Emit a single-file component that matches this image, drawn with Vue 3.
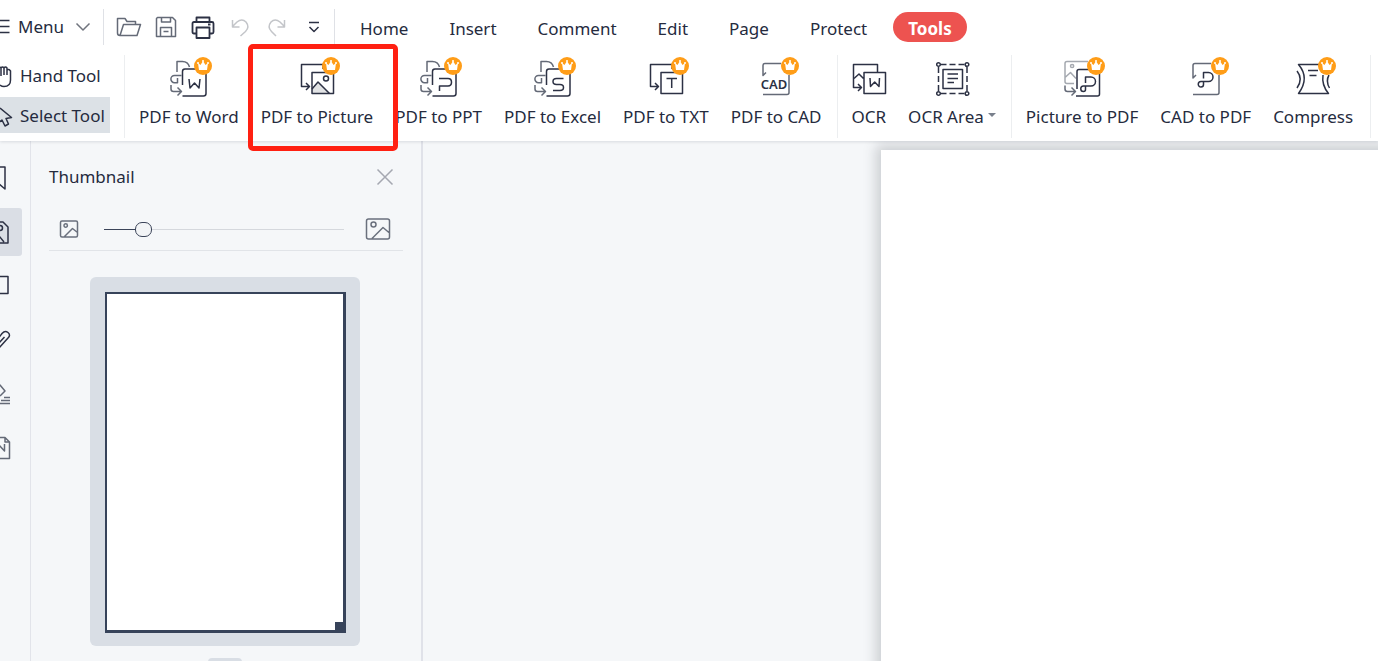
<script setup>
import { ref } from 'vue'

const zoom = ref(14)

const tabs = ['Home', 'Insert', 'Comment', 'Edit', 'Page', 'Protect', 'Tools']
const activeTab = ref('Tools')

const target = 'M17.5 29V15.5Q17.5 13 20 13H38.500Q41 13 41 15.500V37.500Q41 40 38.500 40H17.500'
const flow = [
  { d: 'M12 16V5.500H17.500Q23 5.500 24.500 11', tone: 'soft' },
  { d: 'M16.500 19.500H9.500A3.600 3.600 0 0 0 9.500 26.700H12.500V22', tone: 'soft' },
  { d: 'M6 29V33Q6 35.500 8.500 35.500H16M12.500 31.500L16.500 35.500L12.500 39.500', tone: 'soft' },
  { d: target, tone: 'ink' }
]
const frames = [
  { d: 'M30 13V8.500H8.500V30.500H16M13 27L16.500 30.500L13 34', tone: 'ink' },
  { d: 'M19 16.500H40.500V37.500H19Z', tone: 'ink' }
]

const groups = [
  [
    { label: 'PDF to Word', pro: true, shapes: [...flow, { d: 'M24 23L25 32L29.500 27L34 32L35 23', tone: 'ink' }] },
    {
      label: 'PDF to Picture', pro: true, marked: true,
      shapes: [
        { d: 'M19 33L25 26L36.500 37.500H19Z', tone: 'fill' },
        ...frames,
        { d: 'M19 33L25 26L36.500 37.500', tone: 'ink' },
        { d: 'M30.500 22.500A2.500 2.500 0 1 0 35.500 22.500A2.500 2.500 0 1 0 30.500 22.500', tone: 'ink' }
      ]
    },
    { label: 'PDF to PPT', pro: true, shapes: [...flow, { d: 'M24 22.500H33Q36.500 22.500 36.500 26.200T33 30H24.500V35', tone: 'ink' }] },
    { label: 'PDF to Excel', pro: true, shapes: [...flow, { d: 'M34.500 22.500H27.500Q24 22.500 24 25.500T27.500 28.500H31Q34.500 28.500 34.500 31.500T31 34.500H24', tone: 'ink' }] },
    { label: 'PDF to TXT', pro: true, shapes: [...frames, { d: 'M24.500 22.500H35M29.700 22.500V32', tone: 'ink' }] },
    {
      label: 'PDF to CAD', pro: true, badgeText: 'CAD',
      shapes: [{ d: 'M14 16.500L11 19.500V9.500Q11 7.500 13 7.500H29M37 19V36.500Q37 38.500 35 38.500H11', tone: 'soft' }]
    }
  ],
  [
    {
      label: 'OCR',
      shapes: [
        { d: 'M32.500 16V8.500H8.500V31.500H16M13 28L16.500 31.500L13 35', tone: 'ink' },
        { d: 'M9 22.500L14 18L18.500 22.500M19 16.500H40.500V37.500H19Z', tone: 'ink' },
        { d: 'M25 22L25.500 30.500L29.700 26L34 30.500L34.500 22', tone: 'ink' }
      ]
    },
    {
      label: 'OCR Area', menu: true,
      shapes: [
        { d: 'M12.500 8.500H36.500M12.500 37.500H36.500M10.500 11V35M39 11V35', tone: 'dash' },
        { d: 'M15 13.500H34.500V32.500H15ZM19.500 18H30M19.500 22.500H30M19.500 26.500H26', tone: 'ink' },
        { d: 'M8.700 8.500a1.800 1.800 0 1 0 3.600 0a1.800 1.800 0 1 0-3.600 0M37.200 8.500a1.800 1.800 0 1 0 3.600 0a1.800 1.800 0 1 0-3.600 0M8.700 37.500a1.800 1.800 0 1 0 3.600 0a1.800 1.800 0 1 0-3.600 0M37.200 37.500a1.800 1.800 0 1 0 3.600 0a1.800 1.800 0 1 0-3.600 0', tone: 'ink' }
      ]
    }
  ],
  [
    {
      label: 'Picture to PDF', pro: true,
      shapes: [
        { d: 'M30 5.500H9Q7 5.500 7 7.500V25.500Q7 27.500 9 27.500H16M7 21.500L12.500 16.500L18 22.500M12.500 10a1.600 1.600 0 1 0 3.200 0a1.600 1.600 0 1 0-3.200 0', tone: 'pale' },
        { d: 'M7 29.500V33Q7 35.500 9.500 35.500H17M13.500 31.500L17.500 35.500L13.500 39.500', tone: 'soft' },
        { d: 'M19 33V15.500Q19 13.500 21 13.500H39.500Q41.500 13.500 41.500 15.500V38Q41.500 40 39.500 40H18', tone: 'ink' },
        { d: 'M27.500 27V21H33A4.500 4.500 0 0 1 33 30H25.500A2.500 2.500 0 0 0 25.500 35.500Q27.500 35.500 27.500 33.500V30', tone: 'ink' }
      ]
    },
    {
      label: 'CAD to PDF', pro: true,
      shapes: [
        { d: 'M14 19L11 22V9.500Q11 7.500 13 7.500H29M37 19V36.500Q37 38.500 35 38.500H11', tone: 'soft' },
        { d: 'M21.500 22.500V16.500H26.500A4.500 4.500 0 0 1 26.500 25.500H19A2.500 2.500 0 0 0 19 31Q21.500 31 21.500 28.500V25.500', tone: 'ink' }
      ]
    },
    {
      label: 'Compress', pro: true,
      shapes: [
        { d: 'M30 8.500H9.500Q21 22 9.500 37.500H39.500Q32.500 29 34 19', tone: 'ink' },
        { d: 'M8 15Q14.500 23 8 32M40 19Q36.500 25 40.500 32M19 14.500H29M20.500 19.500H27.500', tone: 'ink' }
      ]
    }
  ]
]

const rail = [
  { label: 'Bookmarks', d: 'M-7 -11H5V11L-1 6L-7 11Z' },
  { label: 'Thumbnails', active: true, d: 'M-8 -10H3L8 -5V11H-8M-2.500 -4a2.500 2.500 0 1 0 5 0a2.500 2.500 0 1 0-5 0M-8 3L-1 4L4 10' },
  { label: 'Pages', d: 'M-9 -9.500H8V7.500H-9Z' },
  { label: 'Attachments', d: 'M-6 4L2 -6.500Q5 -10 8 -7.500T8 -2L-2 9M-1 3L4.500 -3' },
  { label: 'Signatures', soft: true, d: 'M-4 -9L0 -9L5 -3L0 2M4 3.500H10M1 6.500H10M-6 9.500H10' },
  { label: 'Word view', soft: true, d: 'M-9 -10.500H5L9.500 -6V10.500H-9M5 -10.500V-6H9.500M-2 -4L4.500 3V-4' }
]
</script>

<template>
  <div class="app">
    <header class="ribbon">
      <div class="top">
        <button class="menu" type="button">
          <svg width="11" height="18" viewBox="0 0 11 18"><path d="M0 2.500H9.500M0 8.500H9.500M0 14.500H9.500" /></svg>
          <span>Menu</span>
          <svg class="chevron" width="16" height="12" viewBox="0 0 16 12"><path d="M1.500 2.500L8 9L14.500 2.500" /></svg>
        </button>
        <div class="quick">
          <button type="button" aria-label="Open" class="soft">
            <svg width="26" height="26" viewBox="0 0 26 26"><path d="M4 21.500Q1.500 21.500 1.500 19V4.500H9L11 7.500H19.500V10.500M4 21.500H21L24.500 10.500H7.500L4 21.500" /></svg>
          </button>
          <button type="button" aria-label="Save" class="soft">
            <svg width="26" height="26" viewBox="0 0 26 26"><path d="M4.500 3.500H19.500L22.500 6.500V22.500H3.500V4.500ZM8.500 3.500V8H17.500V3.500M7.500 22V13.500H18.500V22M10.500 17.500H15.500" /></svg>
          </button>
          <button type="button" aria-label="Print">
            <svg class="bold" width="26" height="26" viewBox="0 0 26 26"><path d="M6.500 8V3.500H19.500V8M6 19.500H4Q2.500 19.500 2.500 18V9.500Q2.500 8 4 8H22Q23.500 8 23.500 9.500V18Q23.500 19.500 22 19.500H20M6.500 13.500H19.500V24H6.500ZM18 10.500H20.500" /></svg>
          </button>
          <button type="button" aria-label="Undo" class="pale">
            <svg width="26" height="26" viewBox="0 0 26 26"><path d="M5.500 6V13H12.500M5.500 12.500L10 8Q15 4 19 8Q23 13 18.500 17.500L13.500 22" /></svg>
          </button>
          <button type="button" aria-label="Redo" class="pale">
            <svg width="26" height="26" viewBox="0 0 26 26"><path d="M20.500 6V13H13.500M20.500 12.500L16 8Q11 4 7 8Q3 13 7.500 17.500L12 22" /></svg>
          </button>
          <button type="button" aria-label="More commands">
            <svg width="26" height="26" viewBox="0 0 26 26"><path d="M8 8.500H18M8.500 13L13 17.500L17.500 13" /></svg>
          </button>
        </div>
        <nav class="tabs">
          <button
            v-for="tab in tabs"
            :key="tab"
            type="button"
            :class="{ active: tab === activeTab }"
            @click="activeTab = tab"
          >{{ tab }}</button>
        </nav>
      </div>

      <div class="tools">
        <div class="modes">
          <button type="button">
            <svg width="14" height="26" viewBox="0 0 14 26"><path d="M1 13V5Q2.500 3 4 5V12M4 5Q5.500 3 7 5V12M7 7Q9 5.500 10.500 8V17Q10.500 23.500 4 23.500Q1.500 23.500 0 22M1 5Q0 3.500 -2 5" /></svg>
            <span>Hand Tool</span>
          </button>
          <button type="button" class="active">
            <svg width="14" height="26" viewBox="0 0 14 26"><path d="M0 5L11.500 14.500L6 15.500L8.500 21L5 23L2 17L-2 20" /></svg>
            <span>Select Tool</span>
          </button>
        </div>
        <div v-for="(group, g) in groups" :key="g" class="group">
          <button v-for="tool in group" :key="tool.label" type="button" class="tool">
            <svg width="48" height="44" viewBox="0 0 48 44">
              <path v-for="(shape, i) in tool.shapes" :key="i" :d="shape.d" :class="shape.tone" />
              <text v-if="tool.badgeText" x="22" y="33" class="glyph">{{ tool.badgeText }}</text>
              <g v-if="tool.pro">
                <circle cx="38" cy="10" r="9" class="badge" />
                <path class="crown" d="M33 7L35.500 9L38 5L40.500 9L43 7L42 14H34Z" />
                <circle v-for="x in [33, 38, 43]" :key="x" :cx="x" :cy="x === 38 ? 5 : 7" r="1" class="crown" />
              </g>
            </svg>
            <span class="label">{{ tool.label }}<i v-if="tool.menu" class="caret"></i></span>
            <span v-if="tool.marked" class="marker"></span>
          </button>
        </div>
      </div>
    </header>

    <main class="body">
      <nav class="rail">
        <button
          v-for="item in rail"
          :key="item.label"
          type="button"
          :aria-label="item.label"
          :class="{ active: item.active, soft: item.soft }"
        >
          <svg width="12" height="26" viewBox="0 -13 12 26"><path :d="item.d" /></svg>
        </button>
      </nav>

      <aside class="panel">
        <div class="heading">
          <h2>Thumbnail</h2>
          <button type="button" aria-label="Close">
            <svg width="18" height="18" viewBox="0 0 18 18"><path d="M1.500 1.500L16.500 16.500M16.500 1.500L1.500 16.500" /></svg>
          </button>
        </div>
        <div class="sizer">
          <svg width="20" height="18" viewBox="0 0 20 18"><path d="M3 1H17Q18.500 1 18.500 2.500V15.500Q18.500 17 17 17H3Q1.500 17 1.500 15.500V2.500Q1.500 1 3 1ZM5 5.500a1.700 1.700 0 1 0 3.400 0a1.700 1.700 0 1 0-3.400 0M5.500 16.500L13.500 8.500L18.500 12.500" /></svg>
          <input v-model="zoom" type="range" min="0" max="100" aria-label="Thumbnail size" :style="{ '--fill': zoom + '%' }" />
          <svg width="26" height="22" viewBox="0 0 26 22"><path d="M3.500 1H22.500Q24.500 1 24.500 3V19Q24.500 21 22.500 21H3.500Q1.500 21 1.500 19V3Q1.500 1 3.500 1ZM6 6.500a2.500 2.500 0 1 0 5 0a2.500 2.500 0 1 0-5 0M7 20.500L18 9.500L24.500 15" /></svg>
        </div>
        <div class="pages">
          <div class="card"><div class="sheet"></div></div>
          <span class="number"></span>
        </div>
      </aside>

      <section class="canvas"><div class="page"></div></section>
    </main>
  </div>
</template>

<style>
body {
  margin: 0;
}
</style>

<style scoped>
.app {
  display: flex;
  flex-direction: column;
  height: 100vh;
  overflow: hidden;
  background: #f5f7f9;
  color: #252b3e;
  font-family: "Noto Sans", "Open Sans", sans-serif;
  font-size: 17px;
  line-height: 24px;
}
button {
  padding: 0;
  border: 0;
  background: none;
  color: inherit;
  font: inherit;
  white-space: nowrap;
}
svg {
  display: block;
  flex: none;
  fill: none;
  stroke: #2c3144;
  stroke-width: 1.5;
  stroke-linejoin: round;
}
.ribbon {
  position: relative;
  z-index: 1;
  background: #fff;
  box-shadow: 0 1px 3px rgba(40, 50, 70, 0.14);
}
.top {
  display: flex;
  align-items: center;
  height: 54px;
}
.menu {
  display: flex;
  align-items: center;
  width: 104px;
  height: 36px;
  gap: 7px;
  border-right: 1px solid #dfe1e6;
}
.chevron {
  margin-left: 4px;
  stroke: #70747e;
}
.quick {
  display: flex;
  align-items: center;
  height: 36px;
  gap: 11px;
  padding: 0 7px 0 12px;
  border-right: 1px solid #dfe1e6;
}
.bold {
  stroke-width: 1.8;
}
.soft svg {
  stroke: #646a77;
}
.pale svg {
  stroke: #c3c5c9;
}
.tabs {
  display: flex;
  gap: 11px;
  padding: 0 10px;
}
.tabs button {
  height: 30px;
  padding: 3px 15px 0;
  border-radius: 15px;
}
.tabs .active {
  background: #ed5350;
  color: #fff;
  font-weight: 700;
}
.tools {
  display: flex;
  height: 83px;
  padding: 1px 0 3px;
}
.modes {
  display: flex;
  flex-direction: column;
  gap: 4px;
  width: 124px;
  padding-top: 2px;
  box-sizing: border-box;
}
.modes button {
  display: flex;
  align-items: center;
  gap: 6px;
  width: 110px;
  height: 36px;
  padding-top: 2px;
}
.modes .active {
  background: #dce1e6;
}
.group {
  display: flex;
  padding: 0 4px 0 3px;
  border-left: 1px solid #eceef0;
}
.group:last-child {
  padding-right: 6px;
  border-right: 1px solid #eceef0;
}
.tool {
  position: relative;
  display: flex;
  flex-direction: column;
  align-items: center;
  padding: 1px 11px 0;
}
.tool svg {
  margin: 0 -8px;
}
.label {
  display: flex;
  align-items: center;
  margin-top: 5px;
}
.caret {
  margin: 0 0 5px 4px;
  border: 4px solid transparent;
  border-top-color: #79808c;
  border-bottom: 0;
}
.marker {
  position: absolute;
  z-index: 2;
  inset: -11px -14px -13px -2px;
  border: 5px solid #ff2012;
  border-radius: 5px;
}
.soft {
  stroke: #646a77;
}
.tool .pale {
  stroke: #a5a9b0;
}
.fill {
  fill: #e2e3e5;
  stroke: none;
}
.dash {
  stroke-dasharray: 6 3;
}
.glyph {
  fill: #2c3144;
  stroke: none;
  font-size: 13px;
  font-weight: 600;
  text-anchor: middle;
}
.badge {
  fill: #ff9d18;
  stroke: none;
}
.crown {
  fill: #fff;
  stroke: none;
}
.body {
  display: flex;
  flex: 1;
  min-height: 0;
}
.rail {
  display: flex;
  flex-direction: column;
  gap: 6px;
  width: 30px;
  padding-top: 13px;
  border-right: 1px solid #e2e4ea;
}
.rail button {
  width: 22px;
  height: 48px;
  border-radius: 0 3px 3px 0;
}
.rail .active {
  background: #dadee5;
}
.panel {
  width: 390px;
  border-right: 2px solid #e0e2e9;
}
.heading,
.sizer {
  display: flex;
  align-items: center;
  justify-content: space-between;
  margin: 0 18px;
}
.heading {
  height: 72px;
  padding-right: 9px;
}
h2 {
  margin: 0;
  font-size: 17px;
  font-weight: 400;
}
.heading svg {
  stroke: #a5a8b1;
}
.sizer {
  height: 32px;
  padding: 0 12px 5px 10px;
  border-bottom: 1px solid #e1e4e8;
}
.sizer svg {
  stroke: #6a707d;
}
input {
  width: 240px;
  height: 16px;
  margin: 0 0 0 4px;
  appearance: none;
  background: linear-gradient(90deg, #3b4459 var(--fill), #d5d8dd var(--fill)) center / 100% 1px no-repeat;
}
input::-webkit-slider-thumb {
  width: 17px;
  height: 15px;
  appearance: none;
  border: 1px solid #3b4459;
  border-radius: 7px;
  background: #f2f4f6;
}
.pages {
  display: flex;
  flex-direction: column;
  align-items: center;
  gap: 12px;
  padding: 26px 61px 0 59px;
}
.card {
  width: 100%;
  padding: 15px 14px 13px 15px;
  border-radius: 6px;
  background: #d9dee5;
  box-sizing: border-box;
}
.sheet {
  aspect-ratio: 241 / 341;
  border: 2px solid #37435a;
  border-width: 2px 3px 3px 2px;
  box-sizing: border-box;
  background: linear-gradient(#37435a, #37435a) right bottom / 8px 8px no-repeat #fff;
}
.number {
  width: 34px;
  height: 24px;
  border-radius: 4px;
  background: #d9dee5;
}
.canvas {
  display: flex;
  flex: 1;
  overflow: hidden;
}
.page {
  flex: 1;
  margin: 9px -20px -20px 48%;
  background: #fff;
  box-shadow: 0 0 12px 5px rgba(60, 64, 72, 0.22);
}
</style>
